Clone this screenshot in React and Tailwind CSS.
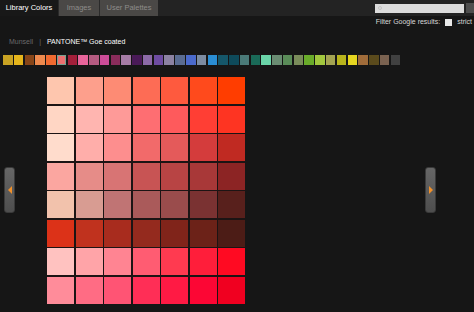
import React from 'react'

const strip = [
  '#c9a323', '#e6b61c', '#874518', '#ee8a4e', '#f06a30', '#ee7070', '#a41f3a', '#e8649a',
  '#b45a80', '#cc4c98', '#8a2c5c', '#a67ca6', '#4a1a58', '#8c6aa8', '#6e4ca2', '#8c82a2',
  '#5a6c92', '#4a6acc', '#7c8ca2', '#2a8ed4', '#15576a', '#0e4a5a', '#4a7a78', '#1a6a58',
  '#6ad4a8', '#6a8c72', '#5a8c58', '#7a8c5a', '#6aac2a', '#a2c83e', '#a4a452', '#b8b41c',
  '#e6d620', '#a06c3a', '#5a4a1c', '#7a6250', '#404040',
]

const grid = [
  ['#fec6ae', '#fd9f8c', '#fd8b74', '#fd6c55', '#fe5a3e', '#ff4a1c', '#ff3d00'],
  ['#ffd6c4', '#ffb5b0', '#fe9a98', '#fe6e72', '#fe5a5c', '#ff3e34', '#fe3422'],
  ['#ffdccc', '#ffaeaa', '#fd8e8e', '#f26a6a', '#e45a5a', '#d43c3c', '#c02a22'],
  ['#fba6a0', '#e68c88', '#d87474', '#c85454', '#b84444', '#a83838', '#8c2424'],
  ['#f2c2ac', '#d89c92', '#c07474', '#aa5a5a', '#9a4c4c', '#7a3232', '#58201c'],
  ['#dc3218', '#c0321e', '#a82c1e', '#942a1e', '#80241a', '#6c2218', '#4c1c16'],
  ['#ffc2c0', '#ffa4a8', '#ff8492', '#ff5c72', '#ff3a50', '#ff1e3a', '#ff0a22'],
  ['#ff8c9a', '#ff6c84', '#ff5474', '#ff2e56', '#ff1a44', '#fc0634', '#f00020'],
]

const Tab = ({ label, active, w }) => (
  <div
    className={
      active
        ? 'h-full flex items-center justify-center bg-[#181818] text-white'
        : 'h-full flex items-center justify-center bg-[#4a4846] text-[#8e8c8a] border-l border-[#2a2a2a]'
    }
    style={{ width: w }}
  >
    {label}
  </div>
)

// side arrow button
const NavButton = ({ dir }) => (
  <div className="w-[11px] h-[46px] rounded-[3px] bg-gradient-to-b from-[#666] to-[#4e4e4e] border border-[#3a3a3a] flex items-center justify-center">
    {dir === 'left' ? (
      <div className="w-0 h-0 border-y-[4px] border-y-transparent border-r-[4px] border-r-[#f0902a]" />
    ) : (
      <div className="w-0 h-0 border-y-[4px] border-y-transparent border-l-[4px] border-l-[#f0902a]" />
    )}
  </div>
)

const App = () => {
  return (
    <div
      className="w-[474px] h-[312px] bg-[#161616] overflow-hidden text-[7px]"
      style={{ fontFamily: '"Liberation Sans", Arial, sans-serif' }}
    >
      <div className="h-[16px] flex bg-[#232323] text-[7.5px]">
        <Tab label="Library Colors" active w={58} />
        <Tab label="Images" w={41} />
        <Tab label="User Palettes" w={59} />
        <div className="ml-auto flex items-center gap-[2px]">
          <div className="w-[89px] h-[9px] bg-[#dcdcdc] flex items-center pl-[3px]">
            <div className="w-[4px] h-[4px] rounded-full border border-[#c4c4c4]" />
          </div>
          <div className="w-[8px] h-[10px] bg-[#4e4e4e]" />
        </div>
      </div>

      <div className="h-[12px] flex items-center justify-end pr-[2px] text-[#d8d8d8]">
        <span>Filter Google results:</span>
        <div className="w-[7px] h-[7px] bg-[#e8e8e8] ml-[5px] mr-[5px]" />
        <span>strict</span>
      </div>

      <div className="h-[27px] flex items-center pl-[9px] pt-[1px]">
        <span className="text-[#6a6a6a]">Munsell</span>
        <span className="text-[#6a6a6a] mx-[6px]">|</span>
        <span className="text-white">PANTONE™ Goe coated</span>
      </div>

      <div className="flex gap-[1.28px] pl-[3px]">
        {strip.map((c, i) => (
          <div
            key={i}
            className={i === 5 ? 'w-[9.5px] h-[10px] border border-[#7aa090]' : 'w-[9.5px] h-[10px]'}
            style={{ backgroundColor: c }}
          />
        ))}
      </div>

      <div className="flex items-center mt-[12px]">
        <div className="ml-[4px]">
          <NavButton dir="left" />
        </div>
        <div className="ml-[32px] grid grid-cols-7 gap-[1.5px] bg-[#1c1414]">
          {grid.flat().map((c, i) => (
            <div key={i} className="w-[27px] h-[27px]" style={{ backgroundColor: c }} />
          ))}
        </div>
        <div className="ml-[180px]">
          <NavButton dir="right" />
        </div>
      </div>
    </div>
  )
}

export default App
